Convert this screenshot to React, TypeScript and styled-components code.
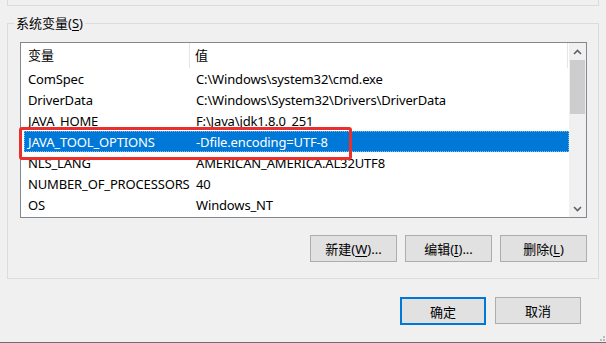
import React from 'react'
import styled, { createGlobalStyle } from 'styled-components'

type EnvVar = {
  name: string
  value: string
}

const vars: EnvVar[] = [
  { name: 'ComSpec', value: 'C:\\Windows\\system32\\cmd.exe' },
  { name: 'DriverData', value: 'C:\\Windows\\System32\\Drivers\\DriverData' },
  { name: 'JAVA_HOME', value: 'F:\\Java\\jdk1.8.0_251' },
  { name: 'JAVA_TOOL_OPTIONS', value: '-Dfile.encoding=UTF-8' },
  { name: 'NLS_LANG', value: 'AMERICAN_AMERICA.AL32UTF8' },
  { name: 'NUMBER_OF_PROCESSORS', value: '40' },
  { name: 'OS', value: 'Windows_NT' },
]

const SELECTED = 'JAVA_TOOL_OPTIONS'

const GlobalStyle = createGlobalStyle`
  html, body {
    margin: 0;
    padding: 0;
    background: #f0f0f0;
  }
  body {
    font-family: "Noto Sans", "Noto Sans CJK SC", sans-serif;
    font-size: 13px;
    color: #000;
  }
`

const Window = styled.div`
  position: relative;
  width: 606px;
  height: 343px;
  box-sizing: border-box;
  display: flex;
  flex-direction: column;
  border-bottom: 1px solid #6e6e6e;
  overflow: hidden;
`

/* 上方的用户变量分组，只露出底边 */
const TopGroup = styled.div`
  height: 6px;
  margin: 0 7px;
  box-sizing: border-box;
  border: 1px solid #dcdcdc;
  border-top: none;
`

const Group = styled.fieldset`
  margin: 9px 7px 0;
  padding: 10px 11px 16px 12px;
  border: 1px solid #dcdcdc;
  min-width: 0;
`

const Legend = styled.legend`
  margin-left: -6px;
  padding: 0 2px;
  height: 17px;
  line-height: 17px;
  font-size: 13px;
`

const Mnemonic = styled.span`
  text-decoration: underline;
  text-underline-offset: 2px;
`

const ListBox = styled.div`
  position: relative;
  height: 176px;
  box-sizing: border-box;
  border: 1px solid #828790;
  background: #fff;
  display: flex;
`

const ListBody = styled.div`
  flex: 1;
  min-width: 0;
  display: flex;
  flex-direction: column;
`

const Header = styled.div`
  height: 25px;
  display: grid;
  grid-template-columns: 162px 1fr;
  padding-left: 7px;
  margin-right: 1px;
  align-items: center;
  border-right: 1px solid #e5e5e5;
`

const HeaderCell = styled.div<{ $first?: boolean }>`
  height: 25px;
  line-height: 25px;
  padding-left: ${({ $first }) => ($first ? '0' : '5px')};
  border-right: ${({ $first }) => ($first ? '1px solid #e5e5e5' : 'none')};
`

const Row = styled.div<{ $selected?: boolean }>`
  height: 21px;
  margin-left: 3px;
  padding-left: 4px;
  display: grid;
  grid-template-columns: 168px 1fr;
  align-items: center;
  white-space: nowrap;
  letter-spacing: -0.15px;
  background: ${({ $selected }) => ($selected ? '#0078d7' : 'transparent')};
  color: ${({ $selected }) => ($selected ? '#fff' : '#000')};
  outline: ${({ $selected }) => ($selected ? '1px dotted #7fbbeb' : 'none')};
  outline-offset: -1px;
`

const Scrollbar = styled.div`
  width: 17px;
  background: #f0f0f0;
  display: flex;
  flex-direction: column;
`

const ArrowButton = styled.div`
  height: 17px;
  display: flex;
  align-items: center;
  justify-content: center;
  color: #606060;
`

const Track = styled.div`
  flex: 1;
  display: flex;
  flex-direction: column;
  padding: 0 1px;
`

const Thumb = styled.div`
  height: 54px;
  background: #cdcdcd;
`

/* 截图上的红色标注框 */
const Highlight = styled.div`
  position: absolute;
  left: -2px;
  top: 84px;
  width: 333px;
  height: 33px;
  box-sizing: border-box;
  border: 3px solid #ec2f2a;
  border-radius: 3px;
  pointer-events: none;
`

const ButtonRow = styled.div<{ $gap?: number }>`
  display: flex;
  justify-content: flex-end;
  gap: ${({ $gap = 8 }) => $gap}px;
`

const ListActions = styled(ButtonRow)`
  margin-top: 17px;
`

const DialogActions = styled(ButtonRow)`
  margin-top: 18px;
  margin-right: 25px;
`

const Button = styled.button<{ $default?: boolean; $width?: number }>`
  width: ${({ $width = 87 }) => $width}px;
  height: ${({ $default }) => ($default ? 28 : 27)}px;
  box-sizing: border-box;
  margin: 0;
  padding: 0;
  background: #e1e1e1;
  border: ${({ $default }) => ($default ? '2px solid #0078d7' : '1px solid #adadad')};
  font-family: inherit;
  font-size: 13px;
  color: #000;
`

const Grip = styled.svg`
  position: absolute;
  right: 1px;
  bottom: 1px;
`

const Chevron = ({ up }: { up?: boolean }) => (
  <svg width="9" height="6" viewBox="0 0 9 6">
    <path
      d={up ? 'M1 5 L4.5 1.5 L8 5' : 'M1 1 L4.5 4.5 L8 1'}
      fill="none"
      stroke="currentColor"
      strokeWidth="1.6"
    />
  </svg>
)

export default function App() {
  return (
    <>
      <GlobalStyle />
      <Window>
        <TopGroup />
        <Group>
          <Legend>
            系统变量(<Mnemonic>S</Mnemonic>)
          </Legend>
          <ListBox>
            <ListBody>
              <Header>
                <HeaderCell $first>变量</HeaderCell>
                <HeaderCell>值</HeaderCell>
              </Header>
              {vars.map(({ name, value }) => (
                <Row key={name} $selected={name === SELECTED}>
                  <span>{name}</span>
                  <span>{value}</span>
                </Row>
              ))}
            </ListBody>
            <Scrollbar>
              <ArrowButton>
                <Chevron up />
              </ArrowButton>
              <Track>
                <Thumb />
              </Track>
              <ArrowButton>
                <Chevron />
              </ArrowButton>
            </Scrollbar>
            <Highlight />
          </ListBox>
          <ListActions>
            <Button>
              新建(<Mnemonic>W</Mnemonic>)...
            </Button>
            <Button>
              编辑(<Mnemonic>I</Mnemonic>)...
            </Button>
            <Button>
              删除(<Mnemonic>L</Mnemonic>)
            </Button>
          </ListActions>
        </Group>
        <DialogActions $gap={9}>
          <Button $default $width={86}>
            确定
          </Button>
          <Button $width={86}>取消</Button>
        </DialogActions>
        <Grip width="5" height="5" viewBox="0 0 5 5">
          <rect x="3" y="0" width="2" height="2" fill="#bcbcbc" />
          <rect x="0" y="3" width="2" height="2" fill="#bcbcbc" />
          <rect x="3" y="3" width="2" height="2" fill="#bcbcbc" />
        </Grip>
      </Window>
    </>
  )
}
